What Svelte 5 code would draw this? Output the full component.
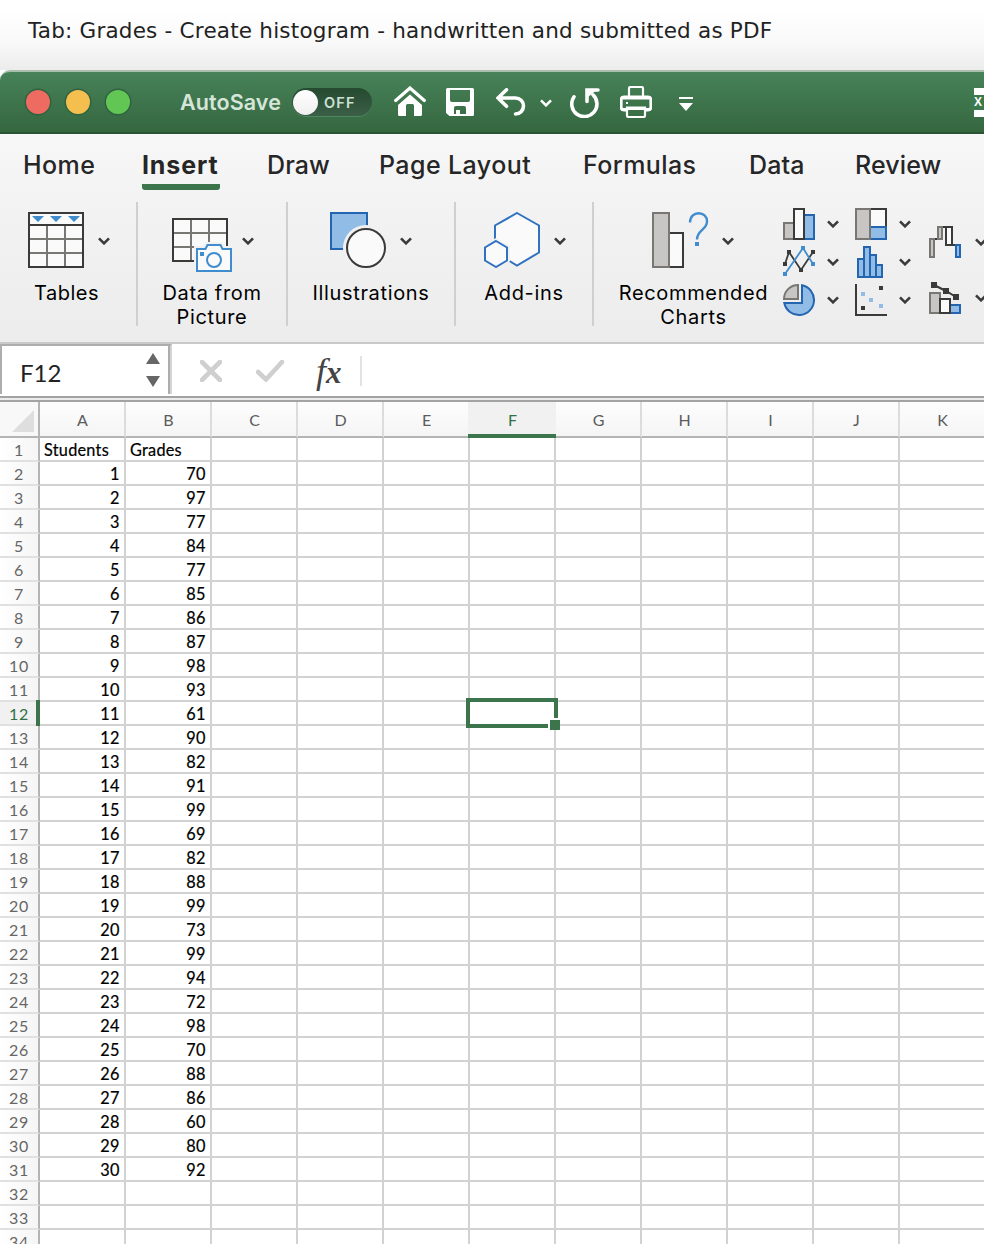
<script>
  const tabs = ['Home', 'Insert', 'Draw', 'Page Layout', 'Formulas', 'Data', 'Review'];
  const columns = ['A', 'B', 'C', 'D', 'E', 'F', 'G', 'H', 'I', 'J', 'K'];
  const grades = [70, 97, 77, 84, 77, 85, 86, 87, 98, 93, 61, 90, 82, 91, 99, 69, 82, 88, 99, 73, 99, 94, 72, 98, 70, 88, 86, 60, 80, 92];
  const rows = Array.from({ length: 34 }, (_, i) => i + 1);

  function value(row, col) {
    if (row === 1) return col === 'A' ? 'Students' : col === 'B' ? 'Grades' : '';
    if (row > grades.length + 1) return '';
    if (col === 'A') return row - 1;
    if (col === 'B') return grades[row - 2];
    return '';
  }
</script>

{#snippet chevron()}
  <svg class="chev" width="12" height="8" viewBox="0 0 12 8"><path d="M1 1.3 6 6.3 11 1.3" fill="none" stroke="currentColor" stroke-width="2.6" /></svg>
{/snippet}

<div class="page">
  <h1><span>Tab: Grades - Create histogram - handwritten and submitted as PDF</span></h1>

  <header class="titlebar">
    <div class="lights"><i class="red"></i><i class="amber"></i><i class="green"></i></div>
    <span class="autosave">AutoSave</span>
    <div class="switch"><b></b><span>OFF</span></div>
    <div class="quick">
      <svg width="32" height="32" viewBox="0 0 32 32" style:margin-left="22px">
        <path d="M1.7 14.5 16 2 30.3 14.5" fill="none" stroke="#fff" stroke-width="3.2" stroke-linecap="round" />
        <path d="M16 8.5 28 19v9.5q0 1.5-1.5 1.5H20V19.5q0-1.5-1.5-1.5h-5q-1.500 0-1.500 1.500V30H5.500Q4 30 4 28.500V19Z" fill="#fff" />
      </svg>
      <svg width="28" height="28" viewBox="0 0 28 28" style:margin-left="20px">
        <path fill="#fff" fill-rule="evenodd" d="M1.500 0h25Q28 0 28 1.500v25q0 1.500-1.500 1.500h-23L0 25V1.500Q0 0 1.500 0ZM4 2v10q0 2 2 2h16q2 0 2-2V2ZM8 26h2v-4h4v4h6v-6q0-2-2-2h-8q-2 0-2 2Z" />
      </svg>
      <svg width="30" height="28" viewBox="0 0 30 28" style:margin-left="22px">
        <path d="M10.500 1.800 2 10l8.500 8.300M2 10h17.500a8 8 0 0 1 0 16" fill="none" stroke="#fff" stroke-width="3.6" stroke-linecap="round" />
      </svg>
      <span class="small">{@render chevron()}</span>
      <svg width="31" height="32" viewBox="0 0 31 32" style:margin-left="18px">
        <path d="M4 10.800A12.600 12.600 0 1 0 23 8.800" fill="none" stroke="#fff" stroke-width="3.6" stroke-linecap="round" />
        <path d="M17 15.500V4h11" fill="none" stroke="#fff" stroke-width="3.600" stroke-linecap="round" />
        <path d="M16 3h12L18 11Z" fill="#fff" />
      </svg>
      <svg width="32" height="32" viewBox="0 0 32 32" style:margin-left="19px">
        <g fill="none" stroke="#fff" stroke-width="2.200">
          <path d="M9 10V2.500Q9 1 10.500 1h11Q23 1 23 2.500V10" />
          <path d="M7 24H4q-2.900 0-2.900-3v-7q0-3 3-3h23.800q3 0 3 3v7q0 3-2.900 3h-3M3 12h26" stroke-width="3" />
          <path d="M7 21.500v8q0 1.500 1.500 1.500h15q1.500 0 1.500-1.500v-8Z" />
          <path d="M2 23h28" stroke-width="2.200" />
        </g>
        <path d="M6 16h2v2H6z" fill="#fff" />
      </svg>
      <svg width="14" height="14" viewBox="0 0 14 14" style:margin-left="27px" style:margin-top="4px">
        <path d="M0 0h14v2H0ZM0 6h14l-7 8Z" fill="#fff" />
      </svg>
    </div>
    <div class="doc"><span>X</span></div>
  </header>

  <nav>
    {#each tabs as tab}
      <span class:active={tab === 'Insert'} class:wide={tab === 'Page Layout' || tab === 'Formulas' || tab === 'Home'}>{tab}</span>
    {/each}
  </nav>

  <section class="ribbon">
    <div class="group g1">
      <div class="icons">
        <svg width="56" height="56" viewBox="0 0 56 56">
          <path d="M1 1h54v54H1Z" fill="#fafafa" />
          <path d="M2 27h52M2 41h52M19 14v40M37 14v40" stroke="#797774" stroke-width="2" />
          <path d="M1 1h54v54H1ZM1 13h54" fill="none" stroke="#3a3a38" stroke-width="2" />
          <path d="M4 4h12l-6 6ZM22 4h12l-6 6ZM40 4h12l-6 6Z" fill="#3f8dce" />
        </svg>
        {@render chevron()}
      </div>
      <p>Tables</p>
    </div>
    <div class="group g2">
      <div class="icons">
        <svg width="60" height="54" viewBox="0 0 60 54">
          <path d="M1 1h54v42H1Z" fill="#fafafa" />
          <path d="M2 15h52M2 29h52M19 2v40M37 2v40" stroke="#797774" stroke-width="2" />
          <path d="M1 1h54v42H1Z" fill="none" stroke="#3a3a38" stroke-width="2" />
          <path d="M22 28h9l3-4h16l3 4h7v26H22Z" fill="#f1f1f1" />
          <path d="M25 31h8.500l2-4h13l2 4H59v22H25Z" fill="#fafafa" stroke="#3f8dce" stroke-width="2" />
          <circle cx="42" cy="42" r="7" fill="none" stroke="#3f8dce" stroke-width="2" />
          <path d="M28 34h4v4h-4z" fill="#3f8dce" />
        </svg>
        {@render chevron()}
      </div>
      <p>Data from<br />Picture</p>
    </div>
    <div class="group g3">
      <div class="icons">
        <svg width="56" height="56" viewBox="0 0 56 56">
          <path d="M1 1h36v36H1Z" fill="#90bce6" stroke="#2465b2" stroke-width="2" />
          <circle cx="36" cy="36" r="23" fill="#f1f1f1" />
          <circle cx="36" cy="36" r="19" fill="#fafafa" stroke="#3a3a38" stroke-width="2" />
        </svg>
        {@render chevron()}
      </div>
      <p>Illustrations</p>
    </div>
    <div class="group g4">
      <div class="icons">
        <svg width="56" height="56" viewBox="0 0 56 56">
          <path d="M33 1 55 13.500v27L33 53.500 11 40.500v-27Z" fill="#fafafa" stroke="#2f72c0" stroke-width="2" />
          <path d="M12 26 26 34v15l-6 7H0V33Z" fill="#f1f1f1" />
          <path d="m12 29 11 6.500v13L12 55 1 48.500v-13Z" fill="#fafafa" stroke="#2f72c0" stroke-width="2" />
        </svg>
        {@render chevron()}
      </div>
      <p>Add-ins</p>
    </div>
    <div class="group g5">
      <div class="icons">
        <svg width="58" height="56" viewBox="0 0 58 56">
          <path d="M17 21h14v34H17Z" fill="#fafafa" stroke="#3a3a38" stroke-width="2" />
          <path d="M1 1h16v54H1Z" fill="#c8c6c4" stroke="#797774" stroke-width="2" />
          <path d="M38 10.500C38 4.500 42 1.200 46.700 1.200S55 4.500 55 9.500C55 18 45 18 45 27.500" fill="none" stroke="#3f8dce" stroke-width="2.400" />
          <path d="M43 30h4v4h-4z" fill="#3f8dce" />
        </svg>
        {@render chevron()}
      </div>
      <p>Recommended<br />Charts</p>
    </div>

    <div class="gallery">
      <div class="item">
        <svg width="32" height="32" viewBox="0 0 32 32" stroke-width="2">
          <path d="M1 15h10v16H1Z" fill="#c8c6c4" stroke="#797774" />
          <path d="M21 7h10v24H21Z" fill="#90bce6" stroke="#2465b2" />
          <path d="M11 1h10v30H11Z" fill="#fafafa" stroke="#3a3a38" />
        </svg>
        {@render chevron()}
      </div>
      <div class="item">
        <svg width="32" height="32" viewBox="0 0 32 32" fill="none" stroke-width="1.800">
          <path d="M2 18 6 6l12 18L30 6" stroke="#3a3a38" />
          <path d="M0 16h4v4H0zM4 4h4v4H4zM16 22h4v4h-4zM28 4h4v4h-4z" fill="#3a3a38" />
          <path d="M2 28 20 2l10 16" stroke="#3f8dce" />
          <path d="M0 26h4v4H0zM18 0h4v4h-4zM28 16h4v4h-4z" fill="#3f8dce" />
        </svg>
        {@render chevron()}
      </div>
      <div class="item">
        <svg width="32" height="32" viewBox="0 0 32 32" stroke-width="2">
          <path d="M19 1.300A15 15 0 1 1 1.300 19H19Z" fill="#90bce6" stroke="#2465b2" />
          <path d="M15 1A14 14 0 0 0 1 15h14Z" fill="#c8c6c4" stroke="#797774" />
        </svg>
        {@render chevron()}
      </div>
    </div>

    <div class="gallery">
      <div class="item">
        <svg width="32" height="32" viewBox="0 0 32 32" stroke-width="2">
          <path d="M15 1h16v30H15Z" fill="#fafafa" stroke="#3a3a38" />
          <path d="M15 19h16v12H15Z" fill="#90bce6" stroke="#2465b2" />
          <path d="M1 1h14v30H1Z" fill="#c8c6c4" stroke="#797774" />
        </svg>
        {@render chevron()}
      </div>
      <div class="item">
        <svg width="32" height="32" viewBox="0 0 32 32" stroke-width="2" fill="#90bce6" stroke="#2465b2">
          <path d="M3 13h6v18H3ZM9 1h6v30H9ZM15 9h6v22h-6ZM21 19h6v12h-6Z" />
        </svg>
        {@render chevron()}
      </div>
      <div class="item">
        <svg width="32" height="32" viewBox="0 0 32 32">
          <path d="M1 0v31h31" fill="none" stroke="#3a3a38" stroke-width="2" />
          <path d="M24 2h4v4h-4zM6 22h4v4H6z" fill="#3a3a38" />
          <path d="M6 8h4v4H6zM14 14h4v4h-4zM24 20h4v4h-4z" fill="#90bce6" />
        </svg>
        {@render chevron()}
      </div>
    </div>

    <div class="gallery last">
      <div class="item">
        <svg width="32" height="32" viewBox="0 0 32 32" stroke-width="2">
          <path d="M5 13h4M13 1h4M23 19h4" stroke="#3a3a38" />
          <path d="M1 13h4v18H1ZM9 1h4v12H9Z" fill="#c8c6c4" stroke="#797774" />
          <path d="M17 1h6v18h-6Z" fill="#fafafa" stroke="#3a3a38" />
          <path d="M27 19h4v12h-4Z" fill="#90bce6" stroke="#2465b2" />
        </svg>
        {@render chevron()}
      </div>
      <div class="item">
        <svg width="32" height="32" viewBox="0 0 32 32" stroke-width="2">
          <path d="M1 11h10v20H1Z" fill="#c8c6c4" stroke="#797774" />
          <path d="M21 23h10v8H21Z" fill="#90bce6" stroke="#2465b2" />
          <path d="M11 17h10v14H11Z" fill="#fafafa" stroke="#3a3a38" />
          <path d="m5 3 12 6 10 6" fill="none" stroke="#3a3a38" />
          <path d="M2 0h6v6H2zM14 6h6v6h-6zM24 12h6v6h-6z" fill="#3a3a38" />
        </svg>
        {@render chevron()}
      </div>
    </div>
  </section>

  <section class="formula">
    <div class="namebox">
      <span>F12</span>
      <svg width="14" height="34" viewBox="0 0 14 34"><path d="M7 0l7 11H0ZM0 23h14L7 34Z" fill="#666" /></svg>
    </div>
    <svg class="cancel" width="22" height="22" viewBox="0 0 22 22"><path d="m2 2 18 18M20 2 2 20" stroke="#cfcfcf" stroke-width="4.600" stroke-linecap="round" /></svg>
    <svg class="check" width="28" height="22" viewBox="0 0 28 22"><path d="m2 12 8 7.500L26 2" fill="none" stroke="#cfcfcf" stroke-width="4.600" stroke-linecap="round" /></svg>
    <span class="fx"><i>f</i>x</span>
    <div class="entry"></div>
  </section>
  <div class="split"></div>

  <main>
    <div class="line head">
      <div class="corner"><svg width="22" height="22"><path d="M22 0v22H0Z" fill="#dedede" /></svg></div>
      {#each columns as col}
        <div class="col" class:sel={col === 'F'}>{col}</div>
      {/each}
    </div>
    {#each rows as row}
      <div class="line">
        <div class="rownum" class:sel={row === 12}>{row}</div>
        {#each columns as col}
          <div class="cell" class:txt={row === 1}>
            {value(row, col)}
            {#if row === 12 && col === 'F'}<div class="cursor"><b></b></div>{/if}
          </div>
        {/each}
      </div>
    {/each}
  </main>
</div>

<style>
  .page { width: 984px; height: 1244px; overflow: hidden; background: #fff; font-family: Inter, sans-serif; color: #000; }
  .page, .page * { box-sizing: border-box; }
  svg { display: block; flex: none; }

  h1 { margin: 0; height: 70px; padding: 17px 0 0 28px; font: 400 21.5px/27px "DejaVu Sans", Verdana, sans-serif; letter-spacing: .21px; color: #222; white-space: nowrap; background: linear-gradient(#fff 15%, #fafafa 55%, #ececec); }

  .titlebar { height: 64px; display: flex; align-items: center; padding-left: 26px; overflow: hidden; background: linear-gradient(#478259, #35673f); border-top: 2px solid #a9c0af; border-bottom: 2px solid #2a5335; border-top-left-radius: 10px; }
  .lights { display: flex; gap: 16px; }
  .lights i { width: 24px; height: 24px; border-radius: 50%; box-shadow: 0 0 0 1.500px #2f6340; }
  .red { background: #ed6b60; }
  .amber { background: #f5bf4f; }
  .green { background: #62c655; }
  .autosave { width: 112px; margin-left: 50px; font-size: 21.5px; font-weight: 600; color: #d6e5d9; letter-spacing: .1px; white-space: nowrap; }
  .switch { width: 80px; height: 28px; border-radius: 14px; display: flex; align-items: center; background: linear-gradient(#244a30, #3c5f47); box-shadow: 0 1px 0 #4f8560; }
  .switch b { width: 25px; height: 25px; margin-left: 1px; border-radius: 50%; background: linear-gradient(#fff, #f0f0f0); }
  .switch span { margin-left: 6px; font-size: 14.5px; font-weight: 600; letter-spacing: 1.2px; color: #cfe0d3; }
  .quick { display: flex; align-items: center; }
  .small { margin-left: 14px; margin-top: 2px; }
  .doc { width: 14px; height: 29px; margin-left: 277px; padding: 7px 0 0 4px; background: linear-gradient(90deg, transparent 4px, #fff 4px); flex: none; }
  .doc span { display: block; width: 14px; height: 15px; margin-left: -4px; padding-left: 4px; background: #3c7a4e; color: #fff; font: 700 12px/15px "Liberation Sans", sans-serif; }

  nav { height: 62px; padding: 15px 0 0 23px; display: grid; grid-template-columns: 119px 125px 112px 204px 166px 106px 110px; background: linear-gradient(#f7f7f7, #f3f3f3); font-size: 25px; line-height: 32px; font-weight: 500; color: #262626; white-space: nowrap; letter-spacing: .1px; }
  nav span { justify-self: start; height: 41px; }
  .wide { letter-spacing: .42px; }
  .active { width: 78px; font-weight: 700; letter-spacing: .85px; background: linear-gradient(#3c754b, #3c754b) 0 100% / 100% 6px no-repeat; border-radius: 3px; }

  .ribbon { height: 148px; padding-top: 6px; display: flex; background: linear-gradient(#f3f3f3, #ececec); border-bottom: 2px solid #c9c9c9; }
  .group { height: 124px; padding-top: 10px; border-right: 2px solid #cfcfcf; flex: none; }
  .icons { height: 58px; display: flex; }
  .chev { margin-top: 25px; color: #3a3a38; }
  .small .chev { margin-top: 0; color: #fff; }
  .group p { margin: 11px 0 0; font-size: 20px; line-height: 24px; text-align: center; white-space: nowrap; letter-spacing: .65px; }
  .g1 { width: 138px; }
  .g1 .icons { padding-left: 28px; gap: 14px; }
  .g1 p { padding-right: 3px; letter-spacing: .5px; }
  .g2 { width: 150px; }
  .g2 .icons { padding-left: 34px; gap: 10px; }
  .g2 .icons svg:first-child { margin-top: 6px; }
  .g3 { width: 168px; }
  .g3 .icons { padding-left: 42px; gap: 14px; }
  .g4 { width: 138px; }
  .g4 .icons { padding-left: 28px; gap: 14px; }
  .g5 { width: 189px; border: 0; }
  .g5 .icons { padding-left: 58px; gap: 12px; }
  .g5 p { padding-left: 10px; }
  .gallery { width: 72px; padding-top: 6px; display: flex; flex-direction: column; gap: 6px; flex: none; }
  .item { display: flex; gap: 12px; height: 32px; }
  .gallery .chev { margin-top: 12px; }
  .gallery.last { margin-left: 2px; padding-top: 24px; gap: 24px; width: 57px; overflow: hidden; }
  .last .item { gap: 14px; }

  .formula { height: 52px; display: flex; background: #fff; }
  .namebox { width: 172px; height: 50px; padding: 7px 10px 0 18px; display: flex; justify-content: space-between; border: 2px solid #adadad; border-right-color: #d4d4d4; border-bottom: 0; box-shadow: inset -2px 0 0 #adadad; font: 400 24px/40px Lato, sans-serif; color: #222; }
  .cancel { margin: 16px 0 0 28px; }
  .check { margin: 16px 0 0 34px; }
  .fx { width: 44px; margin: 4px 0 0 32px; font: italic 700 31px/46px "Liberation Serif", serif; color: #444; }
  .fx i { font-size: 36px; font-weight: 400; }
  .entry { flex: 1; height: 30px; margin-top: 12px; border-left: 2px solid #e2e2e2; }
  .split { height: 6px; border-top: 2px solid #a3a3a3; border-bottom: 2px solid #a3a3a3; background: #ececec; }

  main { font: 400 16px/24px Lato, sans-serif; }
  .line { display: flex; height: 24px; width: 1000px; }
  .head { height: 36px; }
  .corner { width: 40px; padding: 8px 0 0 12px; border-right: 2px solid #b4b4b4; border-bottom: 2px solid #b4b4b4; background: #f8f8f8; flex: none; }
  .col { width: 86px; padding-left: 1px; flex: none; text-align: center; line-height: 36px; color: #5c5c5c; background: linear-gradient(#fdfdfd, #f5f5f5); border-right: 2px solid; border-image: linear-gradient(#f0f0f0, #d4d4d4 60%) 1; border-bottom: 2px solid #b4b4b4; border-image: none; border-right-color: #dcdcdc; }
  .col.sel { background: #f1f1f1; color: #2f7044; border-right: 0; border-bottom: 4px solid #3c754b; margin-left: -2px; width: 88px; }
  .rownum { position: relative; width: 40px; text-align: center; flex: none; letter-spacing: .6px; color: #666; background: linear-gradient(90deg, #fff, #f5f5f5); border-right: 2px solid #b4b4b4; border-bottom: 2px solid #e0e0e0; }
  .rownum.sel { color: #2f7044; background: #f1f1f1; }
  .rownum.sel::after { content: ''; position: absolute; right: -2px; top: -2px; width: 4px; height: 26px; background: #3c754b; }
  .cell { position: relative; width: 86px; flex: none; padding-right: 4px; text-align: right; font-size: 16.3px; -webkit-text-stroke: .2px #000; letter-spacing: .45px; border-right: 2px solid #d2d2d2; border-bottom: 2px solid #d2d2d2; white-space: nowrap; }
  .cell.txt { text-align: left; padding-left: 4px; letter-spacing: .25px; }
  .cursor { position: absolute; left: -4px; top: -4px; width: 92px; height: 30px; border: 4px solid #3c754b; z-index: 1; }
  .cursor b { position: absolute; right: -6px; bottom: -6px; width: 12px; height: 12px; background: #3c754b; border: solid #fff; border-width: 2px 0 0 2px; }
</style>
